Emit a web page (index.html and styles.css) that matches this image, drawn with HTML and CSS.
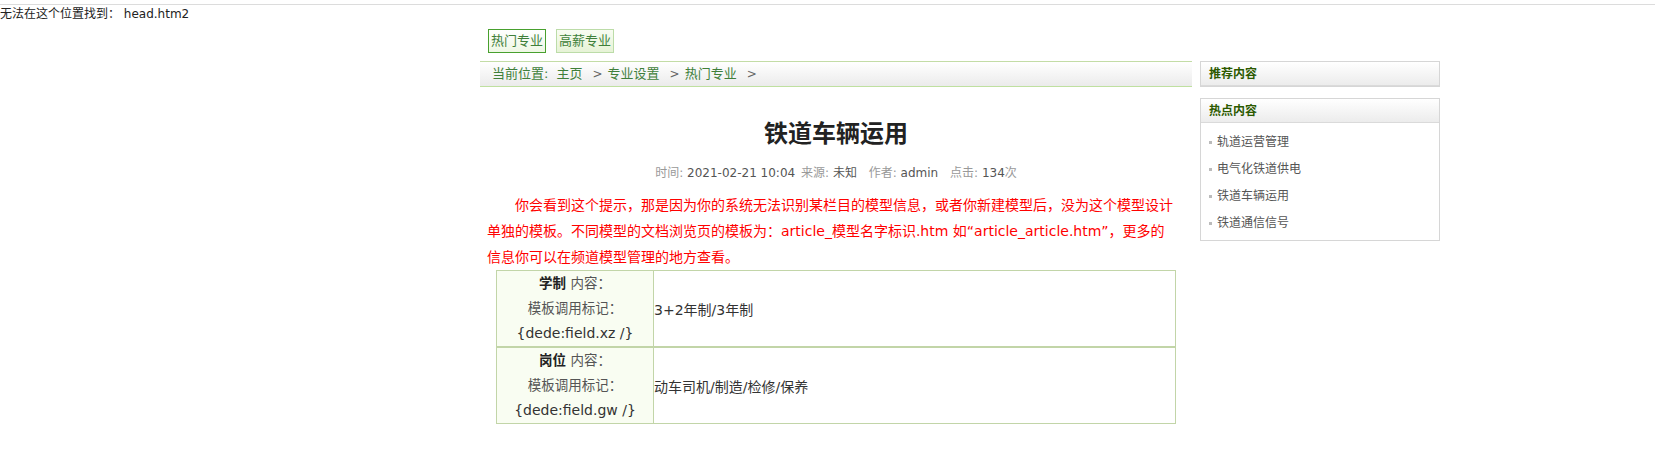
FILE: index.html
```html
<!DOCTYPE html>
<html lang="zh-CN">
<head>
    <meta charset="UTF-8">
    <title>铁道车辆运用</title>
    <link rel="stylesheet" href="styles.css">
</head>
<body>
    <div class="topline"></div>
    <div class="notice">无法在这个位置找到： head.htm2</div>

    <div class="wrap">
        <div class="subnav">
            <a class="tab active" href="#">热门专业</a>
            <a class="tab" href="#">高薪专业</a>
        </div>

        <div class="columns">
            <div class="main">
                <div class="crumbs">
                    当前位置: <a href="#">主页</a><span class="sep">&gt;</span><a href="#">专业设置</a><span class="sep">&gt;</span><a href="#">热门专业</a><span class="sep">&gt;</span>
                </div>

                <h1 class="title">铁道车辆运用</h1>
                <div class="info">
                    时间: <b>2021-02-21 10:04</b>
                    <span class="gap"></span>来源: <b>未知</b>
                    <span class="gap2"></span>作者: <b>admin</b>
                    <span class="gap2"></span>点击: <b>134</b>次
                </div>

                <p class="tip">你会看到这个提示，那是因为你的系统无法识别某栏目的模型信息，或者你新建模型后，没为这个模型设计单独的模板。不同模型的文档浏览页的模板为：article_模型名字标识.htm 如“article_article.htm”，更多的信息你可以在频道模型管理的地方查看。</p>

                <table class="field">
                    <tr>
                        <td class="label"><strong>学制</strong> 内容：<br>模板调用标记：<br><span class="code">{dede:field.xz /}</span></td>
                        <td class="value">3+2年制/3年制</td>
                    </tr>
                </table>
                <table class="field">
                    <tr>
                        <td class="label"><strong>岗位</strong> 内容：<br>模板调用标记：<br><span class="code">{dede:field.gw /}</span></td>
                        <td class="value">动车司机/制造/检修/保养</td>
                    </tr>
                </table>
            </div>

            <div class="side">
                <div class="box">
                    <div class="box-title">推荐内容</div>
                </div>
                <div class="box">
                    <div class="box-title">热点内容</div>
                    <ul class="list">
                        <li><a href="#">轨道运营管理</a></li>
                        <li><a href="#">电气化铁道供电</a></li>
                        <li><a href="#">铁道车辆运用</a></li>
                        <li><a href="#">铁道通信信号</a></li>
                    </ul>
                </div>
            </div>
        </div>
    </div>
</body>
</html>
```

FILE: styles.css
```css
body {
    margin: 0;
    font-family: "DejaVu Sans", "Noto Sans CJK SC", sans-serif;
    font-size: 12px;
    color: #333;
    background: #fff;
}
a {
    text-decoration: none;
}
.topline {
    height: 4px;
    border-bottom: 1px solid #dcdcdc;
}
.notice {
    line-height: 18px;
    color: #222;
}
.wrap {
    width: 960px;
    margin-left: 480px;
}
.subnav {
    display: flex;
    gap: 10px;
    padding: 6px 0 0 8px;
}
.tab {
    display: block;
    height: 22px;
    line-height: 22px;
    padding: 0 2px;
    font-size: 13px;
    color: #3f7f3a;
    border: 1px solid #bcdca8;
    background: linear-gradient(#f8fcf2, #e6f3d6);
}
.tab.active {
    border-color: #48a02e;
    background: linear-gradient(#ffffff, #eef7e4);
}
.columns {
    display: flex;
    gap: 8px;
    margin-top: 8px;
}
.main {
    width: 712px;
}
.crumbs {
    height: 24px;
    line-height: 24px;
    padding-left: 12px;
    font-size: 13px;
    color: #3f7f3a;
    border-top: 1px solid #c3dca6;
    border-bottom: 1px solid #bfe0a0;
    background: linear-gradient(#ffffff, #ebebeb);
}
.crumbs a {
    color: #3f7f3a;
}
.crumbs a:first-child {
    margin-left: 4px;
}
.crumbs .sep {
    padding: 0 5px 0 10px;
    font-size: 12px;
    color: #666;
}
.title {
    margin: 30px 0 0;
    line-height: 34px;
    font-size: 24px;
    font-weight: bold;
    text-align: center;
    color: #222;
}
.info {
    margin-top: 12px;
    line-height: 20px;
    text-align: center;
    color: #999;
}
.info b {
    font-weight: normal;
    color: #555;
}
.info .gap {
    display: inline-block;
    width: 2px;
}
.info .gap2 {
    display: inline-block;
    width: 8px;
}
.tip {
    width: 690px;
    margin: 9px 0 0 7px;
    font-size: 14px;
    line-height: 26px;
    text-indent: 2em;
    color: #ff0000;
}
.field {
    width: 680px;
    margin-left: 16px;
    border-collapse: collapse;
    border: 1px solid #c2d5a8;
    font-size: 13.5px;
}
.field td {
    padding: 0;
    border: 1px solid #c2d5a8;
}
.field .label {
    width: 156px;
    line-height: 25px;
    text-align: center;
    color: #555;
    background: #f9fdf2;
}
.field .label strong {
    color: #222;
}
.field .code {
    font-size: 14px;
    color: #333;
}
.field .value {
    font-size: 14px;
    color: #333;
    vertical-align: middle;
}
.side {
    width: 240px;
    display: flex;
    flex-direction: column;
    gap: 11px;
}
.box {
    border: 1px solid #d6d6d6;
}
.box-title {
    height: 23px;
    line-height: 25px;
    padding-left: 8px;
    font-weight: bold;
    color: #2c5a00;
    border-bottom: 1px solid #dadada;
    background: linear-gradient(#ffffff, #ececec);
}
.list {
    list-style: none;
    margin: 0;
    padding: 6px 0 3px 8px;
}
.list li {
    line-height: 27px;
}
.list li::before {
    content: "";
    display: inline-block;
    width: 3px;
    height: 3px;
    margin-right: 5px;
    vertical-align: middle;
    background: #bbb;
}
.list a {
    color: #555;
}
```
